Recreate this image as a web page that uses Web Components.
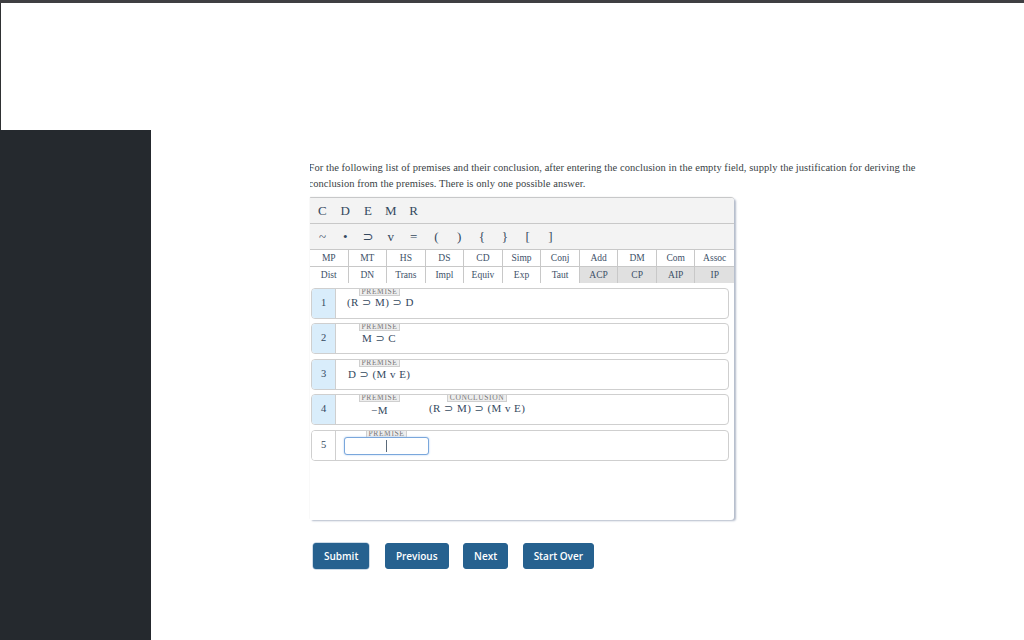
<!DOCTYPE html>
<html>
<head>
<meta charset="utf-8">
<title>Proof</title>
<style>
html, body { margin: 0; padding: 0; background: #fff; }
body { width: 1024px; height: 640px; overflow: hidden; }
</style>
</head>
<body>
<app-shell>
  <p-intro>For the following list of premises and their conclusion, after entering the conclusion in the empty field, supply the justification for deriving the conclusion from the premises. There is only one possible answer.</p-intro>
  <proof-panel>
    <key-row slot="keys" keys="C,D,E,M,R" size="13"></key-row>
    <key-row slot="keys" keys="~,•,⊃,v,=,(,),{,},[,]" size="13"></key-row>
    <rule-grid slot="keys"></rule-grid>
    <proof-line num="1" blue main-x="36" top="7.5">(R ⊃ M) ⊃ D</proof-line>
    <proof-line num="2" blue main-x="51" top="8">M ⊃ C</proof-line>
    <proof-line num="3" blue main-x="37" top="8">D ⊃ (M v E)</proof-line>
    <proof-line num="4" blue main-x="60" top="9" conclusion="(R ⊃ M) ⊃ (M v E)">−M</proof-line>
    <proof-line num="5" active></proof-line>
  </proof-panel>
  <button-bar>
    <action-btn outlined>Submit</action-btn>
    <action-btn>Previous</action-btn>
    <action-btn>Next</action-btn>
    <action-btn>Start Over</action-btn>
  </button-bar>
</app-shell>
<script>
class AppShell extends HTMLElement
{
    constructor()
    {
        super();
        this.attachShadow({ mode: 'open' }).innerHTML = `
        <style>
        :host { display: flex; flex-direction: column; width: 1024px; height: 640px; }
        .topbar { height: 3px; background: #3f3f42; flex: none; }
        .head { height: 127px; flex: none; border-left: 1px solid #2f3133; box-sizing: border-box; }
        .body { flex: 1; display: flex; min-height: 0; }
        .side { width: 151px; flex: none; background: #25292e; }
        .main { flex: 1; padding: 30px 0 0 159px; min-width: 0; }
        </style>
        <div class="topbar"></div>
        <div class="head"></div>
        <div class="body">
          <div class="side"></div>
          <div class="main"><slot></slot></div>
        </div>`;
    }
}

class PIntro extends HTMLElement
{
    constructor()
    {
        super();
        this.attachShadow({ mode: 'open' }).innerHTML = `
        <style>
        :host { display: block; width: 612px; height: 38px; overflow: hidden;
                font: 10.5px/16px "Liberation Serif", serif; letter-spacing: 0.05px; color: #3a3f45; }
        div { margin-left: -1.5px; }
        </style>
        <div><slot></slot></div>`;
    }
}

class ProofPanel extends HTMLElement
{
    constructor()
    {
        super();
        this.attachShadow({ mode: 'open' }).innerHTML = `
        <style>
        :host { display: block; width: 424px; height: 322px; box-sizing: border-box; background: #fff;
                border-radius: 0 3px 3px 0; box-shadow: 2px 1px 2px #b4bccb, 0 -1px 1px #c4c4c4; overflow: hidden; }
        .lines { display: flex; flex-direction: column; gap: 4.5px; padding: 4.75px 5px 0 1px; }
        </style>
        <slot name="keys"></slot>
        <div class="lines"><slot></slot></div>`;
    }
}

class KeyRow extends HTMLElement
{
    connectedCallback()
    {
        var size = this.getAttribute("size");
        var keys = this.getAttribute("keys").split(",");
        var html = "";
        for(var ndx in keys)
            html += `<span>${keys[ndx]}</span>`;
        this.attachShadow({ mode: 'open' }).innerHTML = `
        <style>
        :host { display: flex; height: 26px; box-sizing: border-box; padding-left: 1px; background: #f3f3f3;
                border-bottom: 1px solid #c8c8c8; align-items: center;
                font: ${size}px "Liberation Serif", "DejaVu Sans", serif; color: #34495e; }
        span { width: 22.8px; text-align: center; }
        </style>
        ${html}`;
    }
}

class RuleGrid extends HTMLElement
{
    constructor()
    {
        super();
        var rules = ["MP","MT","HS","DS","CD","Simp","Conj","Add","DM","Com","Assoc",
                     "Dist","DN","Trans","Impl","Equiv","Exp","Taut","ACP","CP","AIP","IP"];
        var html = "";
        for(var cnt = 0; cnt < rules.length; cnt ++)
        {
            var shaded = cnt >= 18 ? ' class="off"' : '';
            html += `<span${shaded}>${rules[cnt]}</span>`;
        }
        this.attachShadow({ mode: 'open' }).innerHTML = `
        <style>
        :host { display: grid; grid-template-columns: repeat(11, minmax(0, 1fr)); grid-auto-rows: 16.5px;
                font: 9.5px "Liberation Serif", serif; color: #3d5068; }
        span { display: flex; align-items: center; justify-content: center; box-sizing: border-box;
               border-right: 1px solid #c8c8c8; border-bottom: 1px solid #c8c8c8; }
        span:nth-of-type(11n) { border-right: 0; }
        span:nth-of-type(n+12) { border-bottom: 0; }
        .off { background: #e0e0e0; }
        </style>
        ${html}`;
    }
}

class ProofLine extends HTMLElement
{
    connectedCallback()
    {
        var num = this.getAttribute("num");
        var active = this.hasAttribute("active");
        var mainX = this.getAttribute("main-x") || 0;
        var top = this.getAttribute("top") || 8;
        var conclusion = this.getAttribute("conclusion");
        var labelX = active ? 55 : 48;

        var conc = "";
        if(conclusion)
            conc = `<span class="tag" style="left:111px;width:60px">CONCLUSION</span>
                    <span class="val" style="left:93px;top:7px">${conclusion}</span>`;
        var input = active ? `<div class="input"><i></i></div>`
                           : `<span class="val" style="left:${mainX - 25}px;top:${top}px"><slot></slot></span>`;

        this.attachShadow({ mode: 'open' }).innerHTML = `
        <style>
        :host { display: flex; height: 31px; box-sizing: border-box; background: #fff; border: 1px solid #cfcfcf;
                border-radius: 4px; font: 11px "Liberation Serif", "DejaVu Sans", serif; color: #34495e; }
        .num { width: 24px; flex: none; display: flex; align-items: center; justify-content: center;
               box-sizing: border-box; border-right: 1px solid #cfcfcf; padding-bottom: 2px;
               background: ${this.hasAttribute("blue") ? "#d9edfb" : "#fff"}; border-radius: 3px 0 0 3px; font-size: 10.5px; }
        .body { position: relative; flex: 1; }
        .tag { position: absolute; top: -1px; left: ${labelX - 25}px; width: 41px; height: 8px; box-sizing: border-box;
               border: 1px solid #cfcfcf; background: #eeeeee; font-size: 7.5px; line-height: 6px; text-align: center;
               letter-spacing: 0.6px; color: #777; overflow: hidden; white-space: nowrap; }
        .val { position: absolute; letter-spacing: 0.45px; white-space: nowrap; }
        .input { position: absolute; left: 8px; top: 6.5px; width: 85px; height: 18px; box-sizing: border-box;
                 border: 1px solid #7aa7dc; border-radius: 3px; box-shadow: 0 0 2px #a9c8ee; background: #fff;
                 display: flex; align-items: center; justify-content: center; }
        .input i { width: 1px; height: 12px; background: #5a6a7a; }
        </style>
        <div class="num">${num}</div>
        <div class="body">
          <span class="tag">PREMISE</span>
          ${input}
          ${conc}
        </div>`;
    }
}

class ButtonBar extends HTMLElement
{
    constructor()
    {
        super();
        this.attachShadow({ mode: 'open' }).innerHTML = `
        <style>
        :host { display: flex; gap: 14.5px; padding: 23px 0 0 3px; }
        </style>
        <slot></slot>`;
    }
}

class ActionBtn extends HTMLElement
{
    constructor()
    {
        super();
        this.attachShadow({ mode: 'open' }).innerHTML = `
        <style>
        :host { display: block; }
        :host([outlined]) { margin-right: 1px; }
        button { height: 26px; padding: 0 10px; border: 1px solid #26618f; border-radius: 3px; background: #26618f;
                 color: #fff; font: 600 10px "Open Sans", sans-serif; }
        :host([outlined]) button { box-shadow: 0 0 0 0.5px #9db8d0; }
        </style>
        <button><slot></slot></button>`;
    }
}

customElements.define("app-shell", AppShell);
customElements.define("p-intro", PIntro);
customElements.define("proof-panel", ProofPanel);
customElements.define("key-row", KeyRow);
customElements.define("rule-grid", RuleGrid);
customElements.define("proof-line", ProofLine);
customElements.define("button-bar", ButtonBar);
customElements.define("action-btn", ActionBtn);
</script>
</body>
</html>
